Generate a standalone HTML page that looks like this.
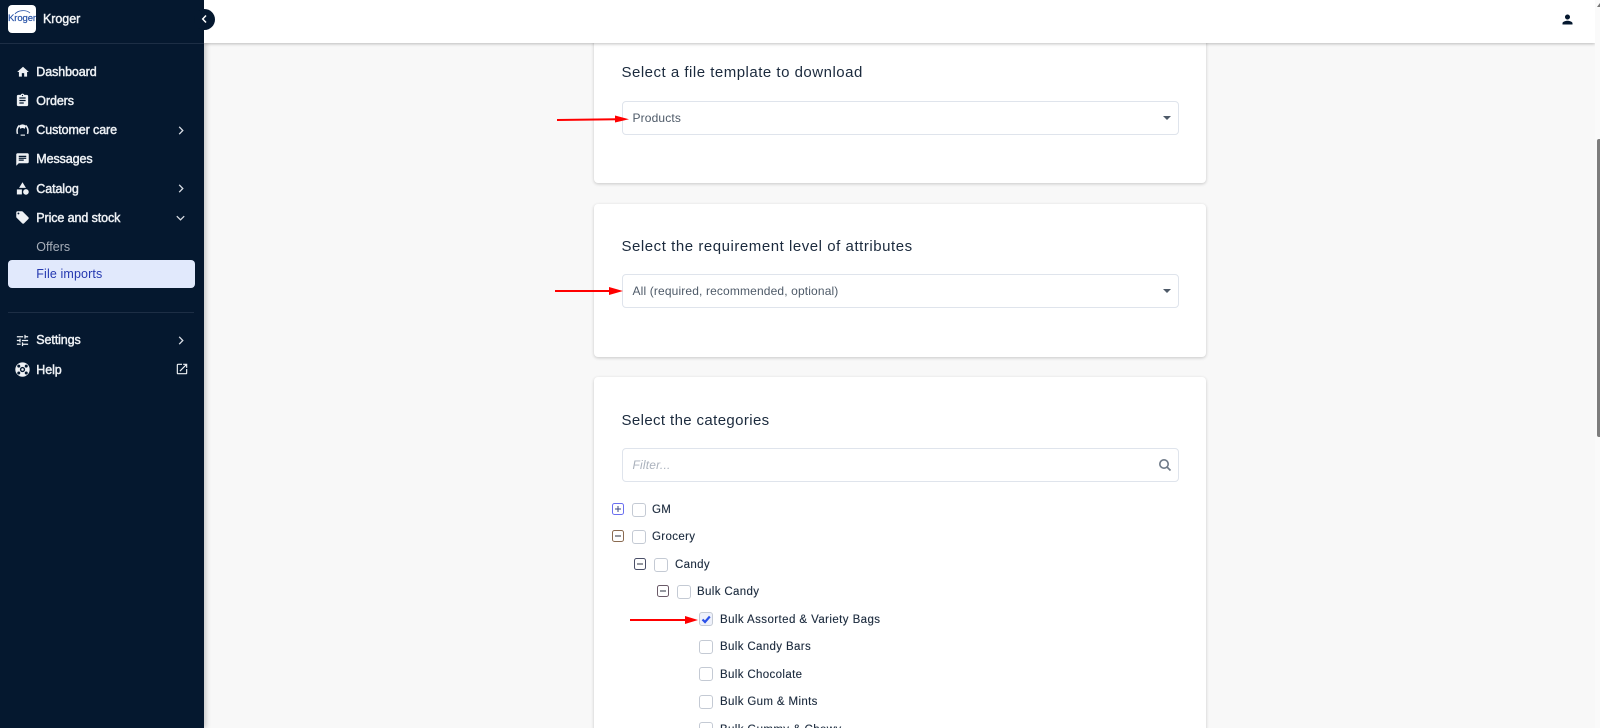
<!DOCTYPE html>
<html><head><meta charset="utf-8"><title>Kroger</title>
<style>
html,body{margin:0;padding:0;width:1600px;height:728px;overflow:hidden;background:#f8f8f8;font-family:"Liberation Sans",sans-serif}
#root{position:relative;width:1600px;height:728px;overflow:hidden;background:#f8f8f8}
.a{position:absolute}
.t{position:absolute;white-space:nowrap;line-height:16px;height:16px}
#side{position:absolute;left:0;top:0;width:204px;height:728px;background:#05182f;box-shadow:2px 0 5px rgba(0,0,0,.2)}
#head{position:absolute;left:204px;top:0;width:1391px;height:43px;background:#fff;box-shadow:0 1px 3px rgba(0,0,0,.25);z-index:3}
.m{color:#eef1f5;font-size:12.5px;left:36.3px;letter-spacing:-.1px;-webkit-text-stroke:.45px #eef1f5}
.card{position:absolute;left:594px;width:612px;background:#fff;border-radius:4px;box-shadow:0 1px 3px rgba(0,0,0,.2)}
.h{color:#1b2a3d;font-size:15px;left:621.5px;letter-spacing:.5px}
.sel{position:absolute;left:621.5px;width:555px;height:32px;border:1px solid #dfe4ec;border-radius:4px;background:#fff}
.v{color:#4e5a68;font-size:12px;left:632.5px;letter-spacing:.14px}
.car{position:absolute;left:1163px;width:0;height:0;border-left:4px solid transparent;border-right:4px solid transparent;border-top:4px solid #4e5a68}
.cb{position:absolute;width:12px;height:12px;border:1px solid #c4cad4;border-radius:3px;background:#fff}
.l{color:#1b2a3d;font-size:11.5px;letter-spacing:.36px;-webkit-text-stroke:.12px #1b2a3d}
svg{position:absolute;overflow:visible}
</style></head><body><div id="root">

<div id="head"></div>
<svg style="left:1560px;top:11.5px;z-index:4" width="15" height="15" viewBox="0 0 24 24" fill="#05182f"><path d="M12 12c2.210 0 4-1.790 4-4s-1.790-4-4-4-4 1.790-4 4 1.790 4 4 4zm0 2c-2.670 0-8 1.340-8 4v2h16v-2c0-2.660-5.330-4-8-4z"/></svg>

<div id="side"></div>
<div class="a" style="left:0;top:43px;width:204px;height:1px;background:#1d2e45"></div>
<div class="a" style="left:8px;top:5px;width:28px;height:28px;background:#fff;border-radius:4px"></div>
<div class="t" style="left:8px;top:11px;width:28px;text-align:center;font-size:9.5px;line-height:16px;color:#2a55a8;letter-spacing:-.1px;-webkit-text-stroke:.2px #2a55a8">Kroger</div>
<svg style="left:14px;top:9px" width="17" height="6" fill="none" stroke="#2a55a8" stroke-width=".8"><path d="M1 5C4 1 12 .5 16 4"/></svg>
<div class="t" style="left:43px;top:11px;color:#f2f4f7;font-size:12.5px;letter-spacing:-.05px;-webkit-text-stroke:.4px #f2f4f7">Kroger</div>
<div class="a" style="left:194px;top:9px;width:21px;height:21px;border-radius:50%;background:#05182f;z-index:5"></div>
<svg style="left:199.5px;top:14px;z-index:6" width="9" height="10" viewBox="0 0 9 10" fill="none" stroke="#fff" stroke-width="1.5"><path d="M6 1.500 2.700 5 6 8.500"/></svg>

<div class="t m" style="top:64px">Dashboard</div>
<div class="t m" style="top:93px">Orders</div>
<div class="t m" style="top:122px">Customer care</div>
<div class="t m" style="top:151px">Messages</div>
<div class="t m" style="top:181px">Catalog</div>
<div class="t m" style="top:210px">Price and stock</div>
<div class="t" style="left:36.3px;top:239px;color:#a7aeb9;font-size:12.5px">Offers</div>
<div class="a" style="left:8px;top:260px;width:186.5px;height:28px;background:#e1e9fc;border-radius:4px"></div>
<div class="t" style="left:36.3px;top:266px;color:#2438b0;font-size:12.5px;letter-spacing:.12px">File imports</div>
<div class="a" style="left:8px;top:312px;width:186px;height:1px;background:#1d2e45"></div>
<div class="t m" style="top:332px">Settings</div>
<div class="t m" style="top:362px">Help</div>

<svg style="left:16px;top:65px" width="14" height="14" viewBox="0 0 24 24" fill="#eef1f5"><path d="M10 20v-6h4v6h5v-8h3L12 3 2 12h3v8z"/></svg>
<svg style="left:15px;top:93px" width="15" height="15" viewBox="0 0 24 24" fill="#eef1f5"><path d="M19 3h-4.180C14.400 1.840 13.300 1 12 1s-2.400.840-2.820 2H5c-1.100 0-2 .900-2 2v14c0 1.100.900 2 2 2h14c1.100 0 2-.900 2-2V5c0-1.100-.900-2-2-2zm-7 0c.550 0 1 .450 1 1s-.450 1-1 1-1-.450-1-1 .450-1 1-1zm2 14H7v-2h7v2zm3-4H7v-2h10v2zm0-4H7V7h10v2z"/></svg>
<svg style="left:15px;top:122px" width="15" height="15" viewBox="0 0 24 24"><path d="M6.500 6A8 8 0 0 1 17.500 6L15.500 11a5 5 0 0 0-7 0z" fill="#eef1f5"/><path d="M4 19C2.500 14 3.500 9 7 5.500M20 19c1.500-5 .5-10-3-13.500" fill="none" stroke="#eef1f5" stroke-width="2.400"/><path d="M9 21h7" stroke="#eef1f5" stroke-width="1.800"/><path d="M9.500 14h.1M14.500 14h.1" stroke="#8a93a3" stroke-width="2"/></svg>
<svg style="left:15px;top:152px" width="15" height="15" viewBox="0 0 24 24" fill="#eef1f5"><path d="M20 2H4c-1.100 0-2 .900-2 2v18l4-4h14c1.100 0 2-.900 2-2V4c0-1.100-.900-2-2-2zM6 9h12v2H6V9zm8 5H6v-2h8v2zm4-6H6V6h12v2z"/></svg>
<svg style="left:15px;top:181px" width="15" height="15" viewBox="0 0 24 24" fill="#eef1f5"><path d="M12 2l-5.500 9h11z"/><circle cx="17.500" cy="17.500" r="4.500"/><path d="M3 13.500h8v8H3z"/></svg>
<svg style="left:15px;top:210px" width="15" height="15" viewBox="0 0 24 24" fill="#eef1f5"><path d="M21.410 11.580l-9-9C12.050 2.220 11.550 2 11 2H4c-1.100 0-2 .900-2 2v7c0 .550.220 1.050.590 1.420l9 9c.360.360.860.580 1.410.580.550 0 1.050-.220 1.410-.590l7-7c.370-.360.590-.860.590-1.410 0-.550-.230-1.060-.590-1.420zM5.500 7C4.670 7 4 6.330 4 5.500S4.670 4 5.500 4 7 4.670 7 5.500 6.330 7 5.500 7z"/></svg>
<svg style="left:15px;top:333px" width="15" height="15" viewBox="0 0 24 24" fill="#eef1f5"><path d="M3 17v2h6v-2H3zM3 5v2h10V5H3zm10 16v-2h8v-2h-8v-2h-2v6h2zM7 9v2H3v2h4v2h2V9H7zm14 4v-2H11v2h10zm-6-4h2V7h4V5h-4V3h-2v6z"/></svg>
<svg style="left:15px;top:362px" width="15" height="15" viewBox="0 0 24 24"><circle cx="12" cy="12" r="11.500" fill="#eef1f5"/><circle cx="12" cy="12" r="4.200" fill="#05182f"/><circle cx="12" cy="12" r="2" fill="#eef1f5"/><g fill="#05182f"><circle cx="6" cy="6.500" r="2.400"/><circle cx="18" cy="6.500" r="2.400"/><circle cx="6" cy="17.500" r="2.400"/><circle cx="18" cy="17.500" r="2.400"/></g></svg>
<svg style="left:174.5px;top:362px" width="14" height="14" viewBox="0 0 24 24" fill="#eef1f5"><path d="M19 19H5V5h7V3H5c-1.110 0-2 .900-2 2v14c0 1.100.890 2 2 2h14c1.100 0 2-.900 2-2v-7h-2v7zM14 3v2h3.590l-9.830 9.830 1.410 1.410L19 6.410V10h2V3h-7z"/></svg>
<svg style="left:177.5px;top:125.5px" width="6" height="9" fill="none" stroke="#d8dce3" stroke-width="1.300"><path d="M1.200 .8 4.800 4.500 1.200 8.200"/></svg>
<svg style="left:177.5px;top:183.5px" width="6" height="9" fill="none" stroke="#d8dce3" stroke-width="1.300"><path d="M1.200 .8 4.800 4.500 1.200 8.200"/></svg>
<svg style="left:177.5px;top:336px" width="6" height="9" fill="none" stroke="#d8dce3" stroke-width="1.300"><path d="M1.200 .8 4.800 4.500 1.200 8.200"/></svg>
<svg style="left:176px;top:214.5px" width="9" height="6" fill="none" stroke="#d8dce3" stroke-width="1.300"><path d="M.8 1.200 4.500 4.800 8.200 1.200"/></svg>

<div class="card" style="top:30px;height:153px"></div>
<div class="t h" style="top:65px">Select a file template to download</div>
<div class="sel" style="top:101px"></div>
<div class="t v" style="top:110px">Products</div>
<div class="car" style="top:116px"></div>

<div class="card" style="top:204px;height:153px"></div>
<div class="t h" style="top:239px;letter-spacing:.54px">Select the requirement level of attributes</div>
<div class="sel" style="top:274px"></div>
<div class="t v" style="top:283px">All (required, recommended, optional)</div>
<div class="car" style="top:289px"></div>

<div class="card" style="top:377px;height:360px"></div>
<div class="t h" style="top:413px;letter-spacing:.38px">Select the categories</div>
<div class="sel" style="top:448px"></div>
<div class="t" style="left:632.5px;top:457px;color:#aab1bc;font-size:12px;font-style:italic;letter-spacing:.2px">Filter...</div>
<svg style="left:1157.5px;top:458px" width="14" height="14" viewBox="0 0 14 14" fill="none" stroke="#6f7a88" stroke-width="1.600"><circle cx="6" cy="6" r="4.200"/><path d="M9 9l3.500 3.500"/></svg>

<svg style="left:612px;top:503px" width="12" height="12" fill="none" stroke="#6a6ff0"><rect x=".5" y=".5" width="11" height="11" rx="2"/><path d="M3 6h6M6 3v6" stroke="#3c4a80"/></svg>
<div class="cb" style="left:632px;top:503px"></div><div class="t l" style="left:652px;top:502px">GM</div>
<svg style="left:612px;top:530px" width="12" height="12" fill="none" stroke="#8a6a50"><rect x=".5" y=".5" width="11" height="11" rx="2"/><path d="M3 6h6" stroke="#2b3240"/></svg>
<div class="cb" style="left:632px;top:530px"></div><div class="t l" style="left:652px;top:529px">Grocery</div>
<svg style="left:634px;top:558px" width="12" height="12" fill="none" stroke="#4a4f68"><rect x=".5" y=".5" width="11" height="11" rx="2"/><path d="M3 6h6" stroke="#2b3240"/></svg>
<div class="cb" style="left:654px;top:558px"></div><div class="t l" style="left:675px;top:557px">Candy</div>
<svg style="left:657px;top:585px" width="12" height="12" fill="none" stroke="#6a5a68"><rect x=".5" y=".5" width="11" height="11" rx="2"/><path d="M3 6h6" stroke="#2b3240"/></svg>
<div class="cb" style="left:677px;top:585px"></div><div class="t l" style="left:697px;top:584px">Bulk Candy</div>
<div class="cb" style="left:699px;top:612px;background:#eef1fb"></div>
<svg style="left:700px;top:613px" width="12" height="12" fill="none" stroke="#2a50e8" stroke-width="2.200"><path d="M2.500 6.500 5 9l4.800-5.500"/></svg>
<div class="t l" style="left:720px;top:612px;letter-spacing:.42px">Bulk Assorted &amp; Variety Bags</div>
<div class="cb" style="left:699px;top:640px"></div><div class="t l" style="left:720px;top:639px">Bulk Candy Bars</div>
<div class="cb" style="left:699px;top:667px"></div><div class="t l" style="left:720px;top:667px">Bulk Chocolate</div>
<div class="cb" style="left:699px;top:695px"></div><div class="t l" style="left:720px;top:694px">Bulk Gum &amp; Mints</div>
<div class="cb" style="left:699px;top:722px"></div><div class="t l" style="left:720px;top:722px">Bulk Gummy &amp; Chewy</div>

<svg style="left:555px;top:112px" width="76" height="16" fill="#f00"><path d="M2 7 62 6.200V8.200L2 9z"/><path d="M60 3.500 74 7.200 60 10.500z"/></svg>
<svg style="left:555px;top:283px" width="70" height="16" fill="#f00"><path d="M0 7h58v2H0z"/><path d="M54 4 68 8 54 12z"/></svg>
<svg style="left:630px;top:612px" width="70" height="16" fill="#f00"><path d="M0 7h58v2H0z"/><path d="M55 4 68 8 55 12z"/></svg>

<div class="a" style="left:1595px;top:0;width:5px;height:728px;background:#fafafa;z-index:6"></div>
<div class="a" style="left:1597px;top:139px;width:3px;height:298px;background:#7d7d7d;border-radius:2px 0 0 2px;z-index:7"></div>
<div class="a" style="left:1597px;top:3px;width:0;height:0;border-left:3px solid transparent;border-right:3px solid transparent;border-bottom:4px solid #777;z-index:7"></div>
</div></body></html>
